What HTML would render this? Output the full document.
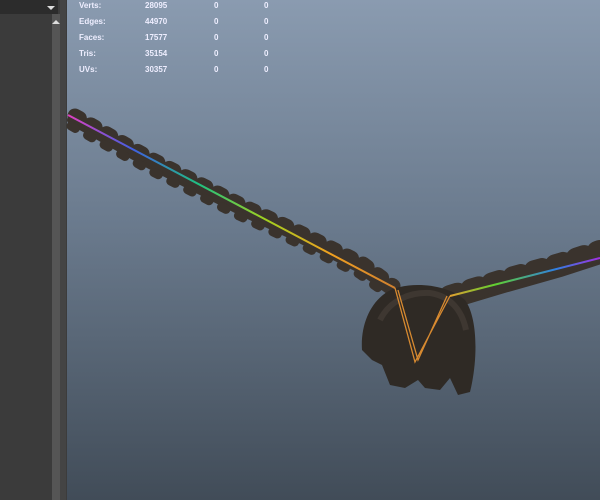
<!DOCTYPE html>
<html><head><style>
body{margin:0;width:600px;height:500px;overflow:hidden;background:#3c3c3c;font-family:"Liberation Sans",sans-serif;position:relative}
.l{position:absolute;left:0;top:0;width:52px;height:500px;background:#3b3b3b}
.dd{position:absolute;left:0;top:0;width:58px;height:14px;background:#2c2c2c}
.sb{position:absolute;left:52px;top:14px;width:8px;height:486px;background:#555}
.sb2{position:absolute;left:60px;top:0;width:6px;height:500px;background:#444}
.vp{position:absolute;left:67px;top:0;width:533px;height:500px;background:linear-gradient(#8a9bb0,#6a7a8d 45%,#414c58)}
.hud{position:absolute;font-size:8px;font-weight:bold;color:#eef}
</style></head><body>
<div class="l"></div><div class="dd"></div>
<div style="position:absolute;left:47px;top:6px;border:4px solid transparent;border-top:4px solid #ddd;border-bottom:0"></div>
<div class="sb"></div>
<div style="position:absolute;left:52px;top:20px;border:4px solid transparent;border-bottom:4px solid #ddd;border-top:0"></div>
<div class="sb2"></div>
<div class="vp"></div>
<svg style="position:absolute;left:0;top:0" width="600" height="500">
<defs>
<linearGradient id="rb" gradientUnits="userSpaceOnUse" x1="68" y1="115" x2="395" y2="290">
<stop offset="0" stop-color="#e040c0"/><stop offset=".2" stop-color="#4060e0"/><stop offset=".4" stop-color="#20c080"/><stop offset=".6" stop-color="#a0d020"/><stop offset=".8" stop-color="#f0a020"/><stop offset="1" stop-color="#d08030"/></linearGradient>
<linearGradient id="rb2" gradientUnits="userSpaceOnUse" x1="450" y1="295" x2="600" y2="258">
<stop offset="0" stop-color="#e0a030"/><stop offset=".3" stop-color="#60d030"/><stop offset=".7" stop-color="#3080e0"/><stop offset="1" stop-color="#a030e0"/></linearGradient>
</defs>
<g stroke="#3a332d" fill="none" stroke-linecap="round">
<path d="M72,120 L150,164 L240,210 L300,238 L360,268 L390,290" stroke-width="10"/>
<path d="M72,120 L150,164 L240,210 L300,238 L360,268 L390,290" stroke-width="15" stroke-dasharray="5 13" transform="translate(3,-4)"/>
<path d="M72,120 L150,164 L240,210 L300,238 L360,268 L390,290" stroke-width="9" stroke-dasharray="5 14" transform="translate(-1,6)"/>
<path d="M450,300 L500,285 L560,268 L600,255" stroke-width="18"/>
<path d="M450,300 L500,285 L560,268 L600,255" stroke-width="22" stroke-dasharray="8 14" transform="translate(0,-4)"/>
</g>
<path d="M362,350 C360,320 375,292 400,287 C420,282 450,286 465,300 C478,318 478,360 470,392 L458,395 L450,378 L440,390 L425,388 L418,380 L405,388 L390,385 L382,365 L372,360 Z" fill="#2f2a25"/>
<path d="M380,320 C390,300 410,292 430,293 C450,296 462,310 466,330" stroke="#3e3731" stroke-width="6" fill="none"/>
<path d="M68,115 L395,288" stroke="url(#rb)" stroke-width="2"/>
<path d="M395,288 L415,362 L450,296 M398,290 L418,360 L447,296" stroke="#d88a30" stroke-width="1.3" fill="none"/>
<path d="M450,296 L600,258" stroke="url(#rb2)" stroke-width="2"/>
</svg>
<div class="hud" style="left:79px;top:-2px;line-height:16px">Verts:<br>Edges:<br>Faces:<br>Tris:<br>UVs:</div>
<div class="hud" style="left:145px;top:-2px;line-height:16px">28095<br>44970<br>17577<br>35154<br>30357</div>
<div class="hud" style="left:214px;top:-2px;line-height:16px">0<br>0<br>0<br>0<br>0</div>
<div class="hud" style="left:264px;top:-2px;line-height:16px">0<br>0<br>0<br>0<br>0</div>
</body></html>
